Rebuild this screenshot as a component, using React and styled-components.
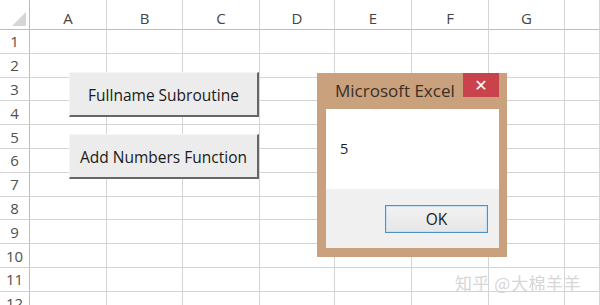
import React from 'react';
import styled, { createGlobalStyle } from 'styled-components';

const GlobalStyle = createGlobalStyle`
  html, body {
    margin: 0;
    padding: 0;
    background: #ffffff;
  }
  body {
    font-family: 'Open Sans', 'Noto Sans', sans-serif;
  }
`;

const colWidths = [77, 76, 77, 75, 77, 77, 76];
const columns = ['A', 'B', 'C', 'D', 'E', 'F', 'G', ''];
const rows = [1, 2, 3, 4, 5, 6, 7, 8, 9, 10, 11, 12];

const Sheet = styled.div`
  position: relative;
  width: 600px;
  height: 305px;
  overflow: hidden;
  background: #ffffff;
`;

const Grid = styled.div`
  display: grid;
  grid-template-columns: 30px ${colWidths.map((w) => `${w}px`).join(' ')} 1fr;
  grid-template-rows: 30px repeat(12, 23.8px);
`;

const Corner = styled.div`
  position: relative;
  border-right: 1px solid #bdbdbd;
  border-bottom: 1px solid #bdbdbd;
  &::after {
    content: '';
    position: absolute;
    right: 3px;
    bottom: 3px;
    width: 0;
    height: 0;
    border-left: 14px solid transparent;
    border-bottom: 14px solid #d6d6d6;
  }
`;

const ColHeader = styled.div`
  display: flex;
  justify-content: center;
  align-items: center;
  padding-top: 6px;
  box-sizing: border-box;
  font-size: 15px;
  color: #444444;
  border-right: 1px solid #d4d4d4;
  border-bottom: 1px solid #bdbdbd;
`;

const RowHeader = styled.div`
  display: flex;
  justify-content: center;
  align-items: center;
  font-size: 15px;
  color: #505050;
  border-right: 1px solid #bdbdbd;
  border-bottom: 1px solid #d4d4d4;
`;

const Cell = styled.div`
  border-right: 1px solid #d4d4d4;
  border-bottom: 1px solid #d4d4d4;
`;

const SheetButton = styled.div`
  position: absolute;
  left: 69px;
  top: ${({ top }) => top}px;
  width: 190px;
  height: 45px;
  box-sizing: border-box;
  display: flex;
  align-items: center;
  justify-content: center;
  padding-top: 1px;
  background: #ececec;
  border-top: 1px solid #f6f6f6;
  border-left: 1px solid #f6f6f6;
  border-right: 2px solid #666666;
  border-bottom: 2px solid #666666;
  font-size: 15.5px;
  color: #1a1a1a;
`;

const Dialog = styled.div`
  position: absolute;
  left: 317px;
  top: 73px;
  width: 190px;
  height: 184px;
  box-sizing: border-box;
  background: #c9a17d;
  padding: 0 8px 9px 9px;
  display: flex;
  flex-direction: column;
`;

const TitleBar = styled.div`
  height: 36px;
  display: flex;
  align-items: flex-start;
  justify-content: space-between;
`;

const Title = styled.div`
  padding: 6px 0 0 9px;
  font-size: 17px;
  color: #3a2f25;
`;

const CloseButton = styled.div`
  width: 36px;
  height: 24px;
  display: flex;
  align-items: center;
  justify-content: center;
  background: #c8434b;
  color: #ffffff;
  font-size: 16px;
  font-weight: bold;
  font-family: 'DejaVu Sans', sans-serif;
`;

const Client = styled.div`
  flex: 1;
  display: flex;
  flex-direction: column;
  background: #f0f0f0;
`;

const Message = styled.div`
  height: 80px;
  box-sizing: border-box;
  background: #ffffff;
  padding: 30px 0 0 14px;
  font-size: 14.5px;
  color: #1a1a1a;
`;

const Footer = styled.div`
  flex: 1;
  display: flex;
  justify-content: flex-end;
  align-items: flex-start;
  padding: 16px 11px 0 0;
`;

const OkButton = styled.div`
  width: 103px;
  height: 28px;
  box-sizing: border-box;
  display: flex;
  align-items: center;
  justify-content: center;
  border: 1px solid #4b93cc;
  box-shadow: inset 0 0 0 1px #c7e0f3;
  background: linear-gradient(#f2f2f2, #e6e6e6);
  font-size: 15.5px;
  color: #1a1a1a;
`;

const Watermark = styled.div`
  position: absolute;
  left: 455px;
  top: 270px;
  font-family: 'Noto Sans CJK SC', sans-serif;
  font-size: 17px;
  color: #d6d6d6;
  letter-spacing: 0.5px;
`;

export default function App() {
  return (
    <>
      <GlobalStyle />
      <Sheet>
        <Grid>
          <Corner />
          {columns.map((c, i) => (
            <ColHeader key={i}>{c}</ColHeader>
          ))}
          {rows.map((r) => (
            <React.Fragment key={r}>
              <RowHeader>{r}</RowHeader>
              {columns.map((c, i) => (
                <Cell key={i} />
              ))}
            </React.Fragment>
          ))}
        </Grid>

        <SheetButton top={72}>Fullname Subroutine</SheetButton>
        <SheetButton top={134}>Add Numbers Function</SheetButton>

        <Dialog>
          <TitleBar>
            <Title>Microsoft Excel</Title>
            <CloseButton>✕</CloseButton>
          </TitleBar>
          <Client>
            <Message>5</Message>
            <Footer>
              <OkButton>OK</OkButton>
            </Footer>
          </Client>
        </Dialog>

        <Watermark>知乎 @大棉羊羊</Watermark>
      </Sheet>
    </>
  );
}
